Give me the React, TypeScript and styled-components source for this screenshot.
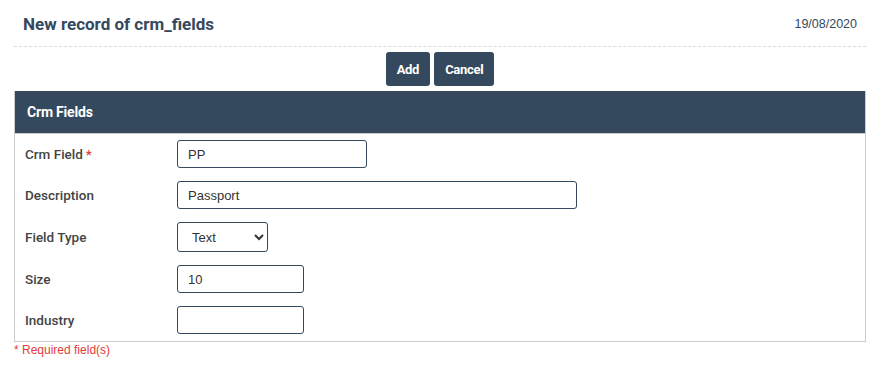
import React from "react";
import styled, { createGlobalStyle } from "styled-components";

const GlobalStyle = createGlobalStyle`
  body {
    margin: 0;
    background: #ffffff;
    font-family: Roboto, "Liberation Sans", Arial, sans-serif;
  }
`;

const Page = styled.div`
  padding: 0 16px 0 14px;
`;

const TitleBar = styled.div`
  height: 44px;
  display: flex;
  align-items: center;
  justify-content: space-between;
  padding: 2px 9px 0 9px;
  border-bottom: 1px dashed #dcdcdc;
`;

const Title = styled.h1`
  margin: 0;
  font-size: 17px;
  font-weight: 700;
  color: #34495e;
`;

const DateText = styled.span`
  font-family: "Liberation Sans", Arial, sans-serif;
  font-size: 12.5px;
  color: #34495e;
`;

const Toolbar = styled.div`
  display: flex;
  justify-content: center;
  gap: 4px;
  padding-top: 5px;
  margin-bottom: 5px;
`;

const Button = styled.button`
  height: 34px;
  padding: 0 11px;
  border: none;
  border-radius: 3px;
  background: #34495e;
  color: #ffffff;
  font-family: Roboto, "Liberation Sans", Arial, sans-serif;
  font-size: 13px;
  font-weight: 700;
  letter-spacing: -0.3px;
  cursor: pointer;
`;

const Panel = styled.div`
  border: 1px solid #cccccc;
  border-top: none;
`;

const PanelHeader = styled.div`
  height: 42px;
  display: flex;
  align-items: center;
  padding: 0 12px;
  background: #34495e;
  color: #ffffff;
  font-size: 14px;
  font-weight: 700;
  letter-spacing: -0.2px;
  border-bottom: 1px solid #cccccc;
`;

const Form = styled.div`
  display: flex;
  flex-direction: column;
  gap: 13px;
  padding: 6px 10px 7px 10px;
`;

const Row = styled.div`
  display: flex;
  align-items: center;
`;

const Label = styled.label`
  width: 152px;
  font-size: 13.5px;
  font-weight: 500;
  color: #444444;
`;

const Star = styled.span`
  color: #e23c3c;
  margin-left: 3px;
`;

const TextInput = styled.input<{ $w: number }>`
  box-sizing: border-box;
  width: ${(p) => p.$w}px;
  height: 28px;
  padding: 0 10px;
  border: 1px solid #34495e;
  border-radius: 3px;
  font-family: "Liberation Sans", Arial, sans-serif;
  font-size: 13px;
  color: #333333;
  outline: none;
`;

const Select = styled.select`
  box-sizing: border-box;
  width: 91px;
  height: 30px;
  padding: 0 10px;
  border: 1px solid #34495e;
  border-radius: 3px;
  background: #ffffff;
  font-family: "Liberation Sans", Arial, sans-serif;
  font-size: 13px;
  color: #333333;
  outline: none;
`;

const Required = styled.div`
  padding-top: 1px;
  font-family: "Liberation Sans", Arial, sans-serif;
  font-size: 12px;
  color: #e23c3c;
`;

export default function App() {
  return (
    <Page>
      <GlobalStyle />
      <TitleBar>
        <Title>New record of crm_fields</Title>
        <DateText>19/08/2020</DateText>
      </TitleBar>
      <Toolbar>
        <Button>Add</Button>
        <Button>Cancel</Button>
      </Toolbar>
      <Panel>
        <PanelHeader>Crm Fields</PanelHeader>
        <Form>
          <Row>
            <Label>
              Crm Field<Star>*</Star>
            </Label>
            <TextInput $w={190} defaultValue="PP" />
          </Row>
          <Row>
            <Label>Description</Label>
            <TextInput $w={400} defaultValue="Passport" />
          </Row>
          <Row>
            <Label>Field Type</Label>
            <Select defaultValue="Text">
              <option>Text</option>
              <option>Number</option>
              <option>Date</option>
            </Select>
          </Row>
          <Row>
            <Label>Size</Label>
            <TextInput $w={127} defaultValue="10" />
          </Row>
          <Row>
            <Label>Industry</Label>
            <TextInput $w={127} defaultValue="" />
          </Row>
        </Form>
      </Panel>
      <Required>* Required field(s)</Required>
    </Page>
  );
}
